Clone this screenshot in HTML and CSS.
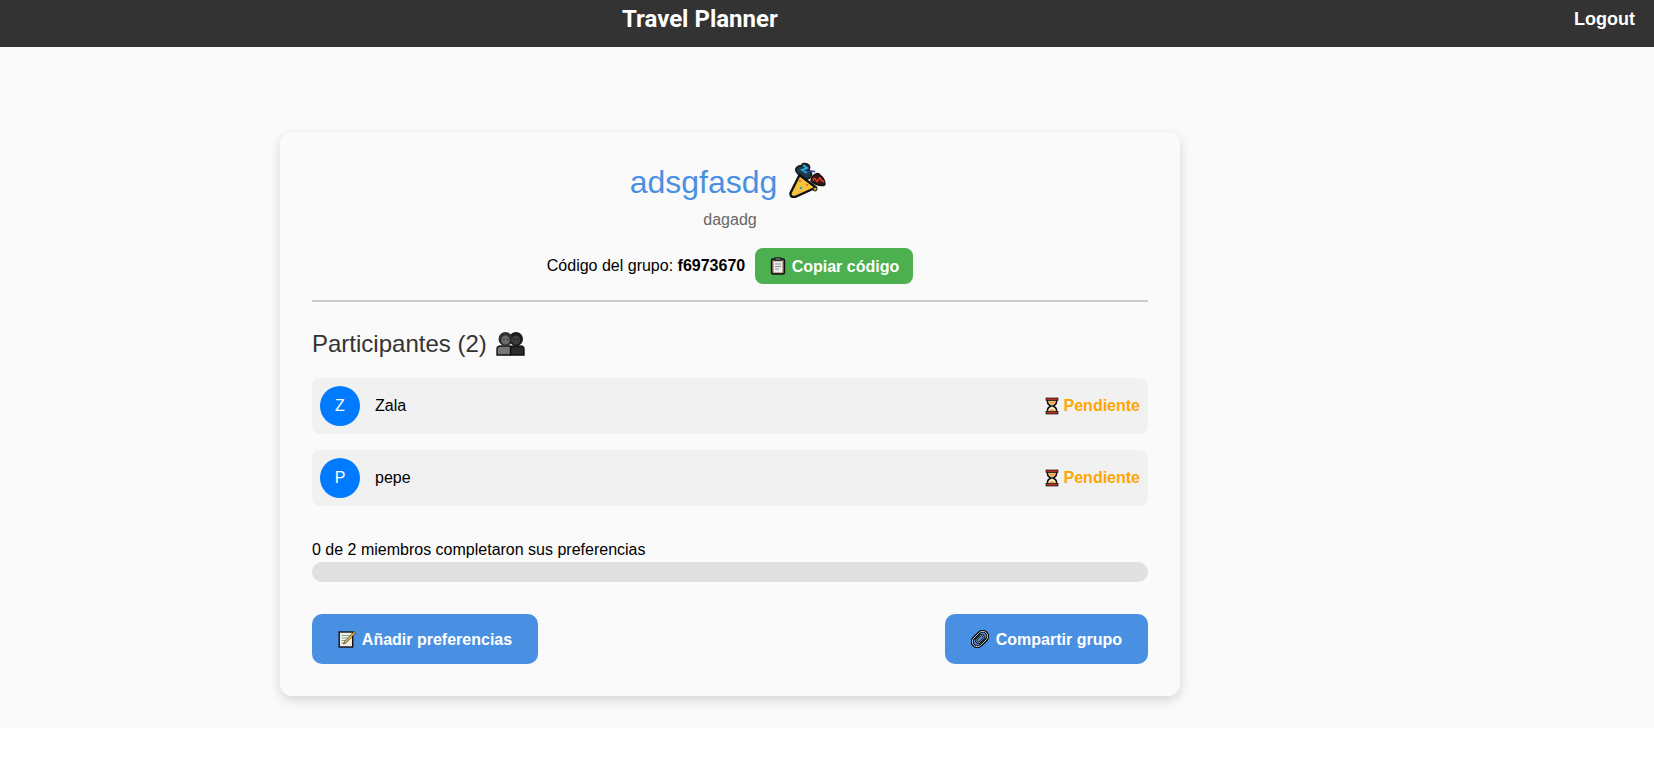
FILE: index.html
```html
<!DOCTYPE html>
<html lang="en">
<head>
    <meta charset="UTF-8">
    <meta name="viewport" content="width=device-width, initial-scale=1.0">
    <title>Travel Planner</title>
    <link rel="stylesheet" href="styles.css">
</head>
<body>
    <header class="topbar">
        <span class="brand">Travel Planner</span>
        <a class="logout">Logout</a>
    </header>

    <main class="page">
        <div class="card">
            <h1 class="group-name">adsgfasdg
                <svg class="emoji party" viewBox="0 0 37 36">
                    <path d="M9 12 Q5 8 8 5 Q11 3 12 4 Q14 0 18 2 Q22 4 20 8 Q24 11 22 14 Q20 18 16 17 Z" fill="#1d3947" stroke="#111" stroke-width="1.4"/>
                    <path d="M14 3 L18 6 L13 8 L18 11" fill="none" stroke="#2aa6d9" stroke-width="2"/>
                    <path d="M22 19 Q22 15 25 13 Q29 10 31 13 Q36 17 36 22 Q36 24 32 23.5 Q26 23 22 19 Z" fill="#3a1512" stroke="#111" stroke-width="1.4"/>
                    <path d="M24 19 Q25 14 27 18 Q28 21 30 17 Q31 14 32 18 L35 20" fill="none" stroke="#e0402c" stroke-width="1.6"/>
                    <path d="M19 10 Q22 8 26 10" fill="none" stroke="#3b3f8f" stroke-width="1.6"/>
                    <path d="M10.5 13 L27 25.5 L6 35 Q1 35.5 1.5 31 Z" fill="#f5c33b" stroke="#111" stroke-width="2.4" stroke-linejoin="round"/>
                    <circle cx="26" cy="27" r="2" fill="#caa52c" stroke="#111"/>
                    <circle cx="12" cy="26" r="1.2" fill="#2f9bd0"/>
                    <circle cx="11" cy="19" r="1.1" fill="#e0592c"/>
                    <circle cx="18" cy="23" r="1" fill="#e0592c"/>
                </svg>
            </h1>
            <p class="group-desc">dagadg</p>
            <div class="code-row">
                <span>Código del grupo: <strong>f6973670</strong></span>
                <button class="btn-copy">
                    <svg class="emoji" viewBox="0 0 18 18">
                        <rect x="2.5" y="2" width="13" height="15" rx="1.5" fill="#8a6d4f" stroke="#111" stroke-width="1.4"/>
                        <rect x="4.5" y="4" width="9" height="11.5" fill="#eee"/>
                        <rect x="6" y="0.8" width="6" height="3" fill="#666" stroke="#111" stroke-width="0.8"/>
                        <path d="M6 7h6M6 9.5h6M6 12h4" stroke="#888" stroke-width="1"/>
                    </svg>
                    Copiar código
                </button>
            </div>
            <hr class="divider">

            <h2 class="section-title">Participantes (2)
                <svg class="emoji people" viewBox="0 0 29 25">
                    <path d="M14.5 24 V18 Q14.5 15 18 15 H24 Q28 15 28 18 V24 Z" fill="#2a2a2a" stroke="#111" stroke-width="1.4"/>
                    <path d="M1 24 V18 Q1 15 5 15 H14.5 V24 Z" fill="#777" stroke="#111" stroke-width="1.4"/>
                    <circle cx="20" cy="8" r="7" fill="#1c1c1c"/>
                    <circle cx="9.5" cy="8" r="7" fill="#2e2e2e"/>
                    <ellipse cx="20" cy="9" rx="4.2" ry="4.6" fill="#3c3c3c"/>
                    <ellipse cx="9.5" cy="9" rx="4.2" ry="4.6" fill="#6a6a6a"/>
                    <path d="M7.5 8.5h1M11 8.5h1M18 8.5h1M21.5 8.5h1" stroke="#111" stroke-width="1"/>
                </svg>
            </h2>

            <ul class="members">
                <li class="member">
                    <span class="avatar">Z</span>
                    <span class="member-name">Zala</span>
                    <span class="status">
                        <svg class="emoji hourglass" viewBox="0 0 14 18">
                            <path d="M2.5 2.5 H11.5 V5 Q11.5 7.5 8 9 Q11.5 10.5 11.5 13 V15.5 H2.5 V13 Q2.5 10.5 6 9 Q2.5 7.5 2.5 5 Z" fill="#f6e6cc" stroke="#111" stroke-width="1.5"/>
                            <rect x="1" y="1" width="12" height="2.4" fill="#b5301f" stroke="#111" stroke-width="0.7"/>
                            <rect x="1" y="14.6" width="12" height="2.4" fill="#b5301f" stroke="#111" stroke-width="0.7"/>
                            <path d="M4 4.2 H10 V5.6 L7 8 L4 5.6 Z M4 14 L7 11.8 L10 14 Z" fill="#f0a63a"/>
                        </svg>
                        Pendiente
                    </span>
                </li>
                <li class="member">
                    <span class="avatar">P</span>
                    <span class="member-name">pepe</span>
                    <span class="status">
                        <svg class="emoji hourglass" viewBox="0 0 14 18">
                            <path d="M2.5 2.5 H11.5 V5 Q11.5 7.5 8 9 Q11.5 10.5 11.5 13 V15.5 H2.5 V13 Q2.5 10.5 6 9 Q2.5 7.5 2.5 5 Z" fill="#f6e6cc" stroke="#111" stroke-width="1.5"/>
                            <rect x="1" y="1" width="12" height="2.4" fill="#b5301f" stroke="#111" stroke-width="0.7"/>
                            <rect x="1" y="14.6" width="12" height="2.4" fill="#b5301f" stroke="#111" stroke-width="0.7"/>
                            <path d="M4 4.2 H10 V5.6 L7 8 L4 5.6 Z M4 14 L7 11.8 L10 14 Z" fill="#f0a63a"/>
                        </svg>
                        Pendiente
                    </span>
                </li>
            </ul>

            <p class="progress-label">0 de 2 miembros completaron sus preferencias</p>
            <div class="progress-bar"></div>

            <div class="actions">
                <button class="btn-main">
                    <svg class="emoji" viewBox="0 0 18 18">
                        <rect x="1.2" y="2" width="13.5" height="15" fill="#f4efe2" stroke="#111" stroke-width="1.4"/>
                        <path d="M3.5 5.5h8M3.5 8h6M3.5 10.5h4M3.5 13h3" stroke="#7aa" stroke-width="1"/>
                        <path d="M16 1.5 L17.5 3 L8 13 L5.5 14 L6.5 11.5 Z" fill="#f2b23a" stroke="#222" stroke-width="0.6"/>
                    </svg>
                    Añadir preferencias
                </button>
                <button class="btn-main">
                    <svg class="emoji" viewBox="0 0 18 18">
                        <g transform="rotate(-45 9 9)" fill="none">
                            <rect x="0.2" y="4" width="17.6" height="10" rx="5" stroke="#000" stroke-width="3"/>
                            <rect x="0.2" y="4" width="17.6" height="10" rx="5" stroke="#ddd" stroke-width="0.9"/>
                            <rect x="4.5" y="6.8" width="9" height="4.4" rx="2.2" stroke="#000" stroke-width="2"/>
                            <rect x="4.5" y="6.8" width="9" height="4.4" rx="2.2" stroke="#bbb" stroke-width="0.7"/>
                        </g>
                    </svg>
                    Compartir grupo
                </button>
            </div>
        </div>
    </main>
</body>
</html>
```

FILE: styles.css
```css
* {
    box-sizing: border-box;
}
body {
    margin: 0;
    font-family: "Liberation Sans", Arial, sans-serif;
    background: #fff;
    color: #000;
}
.topbar {
    display: flex;
    align-items: flex-start;
    justify-content: space-between;
    height: 47px;
    padding: 4px 19px 0 622px;
    background: #333;
    color: #fff;
    font-weight: 700;
}
.brand {
    font-family: Roboto, sans-serif;
    font-size: 24px;
    line-height: 30px;
}
.logout {
    font-size: 18px;
    line-height: 30px;
}
.page {
    height: 681px;
    padding: 85px 0 0 280px;
    background: #fafafa;
}
.card {
    width: 900px;
    height: 564px;
    padding: 30px 32px 32px;
    background: #fafafa;
    border-radius: 12px;
    box-shadow: 0 4px 12px rgba(0, 0, 0, 0.15);
}
.emoji {
    display: inline-block;
    width: 18px;
    height: 18px;
    vertical-align: -3px;
}
.group-name {
    margin: 0;
    text-align: center;
    font-size: 32px;
    line-height: 37px;
    font-weight: 400;
    color: #4a90e2;
}
.party {
    width: 37px;
    height: 36px;
    margin: 0 4px 0 3px;
    vertical-align: -5px;
}
.group-desc {
    margin: 10px 0 0;
    text-align: center;
    font-size: 16px;
    line-height: 18px;
    color: #666;
}
.code-row {
    display: flex;
    align-items: center;
    justify-content: center;
    gap: 10px;
    margin-top: 19px;
    font-size: 16px;
}
.btn-copy {
    height: 36px;
    padding: 0 14px;
    border: none;
    border-radius: 8px;
    background: #4caf50;
    color: #fff;
    font: 700 16px "Liberation Sans", Arial, sans-serif;
}
.divider {
    height: 2px;
    margin: 16px 0 0;
    border: none;
    background: #ccc;
}
.section-title {
    margin: 28px 0 0;
    font-size: 24px;
    line-height: 28px;
    font-weight: 400;
    color: #333;
}
.people {
    width: 29px;
    height: 25px;
    margin-left: 3px;
    vertical-align: -4px;
}
.members {
    margin: 20px 0 0;
    padding: 0;
    list-style: none;
}
.member {
    display: flex;
    align-items: center;
    height: 56px;
    margin-bottom: 16px;
    padding: 0 8px;
    background: #f1f1f1;
    border-radius: 8px;
    font-size: 16px;
}
.avatar {
    display: flex;
    align-items: center;
    justify-content: center;
    width: 40px;
    height: 40px;
    margin-right: 15px;
    border-radius: 50%;
    background: #007bff;
    color: #fff;
}
.member-name {
    flex: 1;
}
.status {
    display: flex;
    align-items: center;
    gap: 5px;
    color: #ffa500;
    font-weight: 700;
}
.hourglass {
    width: 14px;
    height: 18px;
}
.progress-label {
    margin: 35px 0 0;
    font-size: 16px;
    line-height: 18px;
}
.progress-bar {
    height: 20px;
    margin-top: 3px;
    border-radius: 10px;
    background: #e0e0e0;
}
.actions {
    display: flex;
    justify-content: space-between;
    margin-top: 32px;
}
.btn-main {
    height: 50px;
    padding: 0 26px;
    border: none;
    border-radius: 10px;
    background: #4a90e2;
    color: #fff;
    font: 700 16px "Liberation Sans", Arial, sans-serif;
}
.btn-main .emoji {
    margin-right: 2px;
}
```
